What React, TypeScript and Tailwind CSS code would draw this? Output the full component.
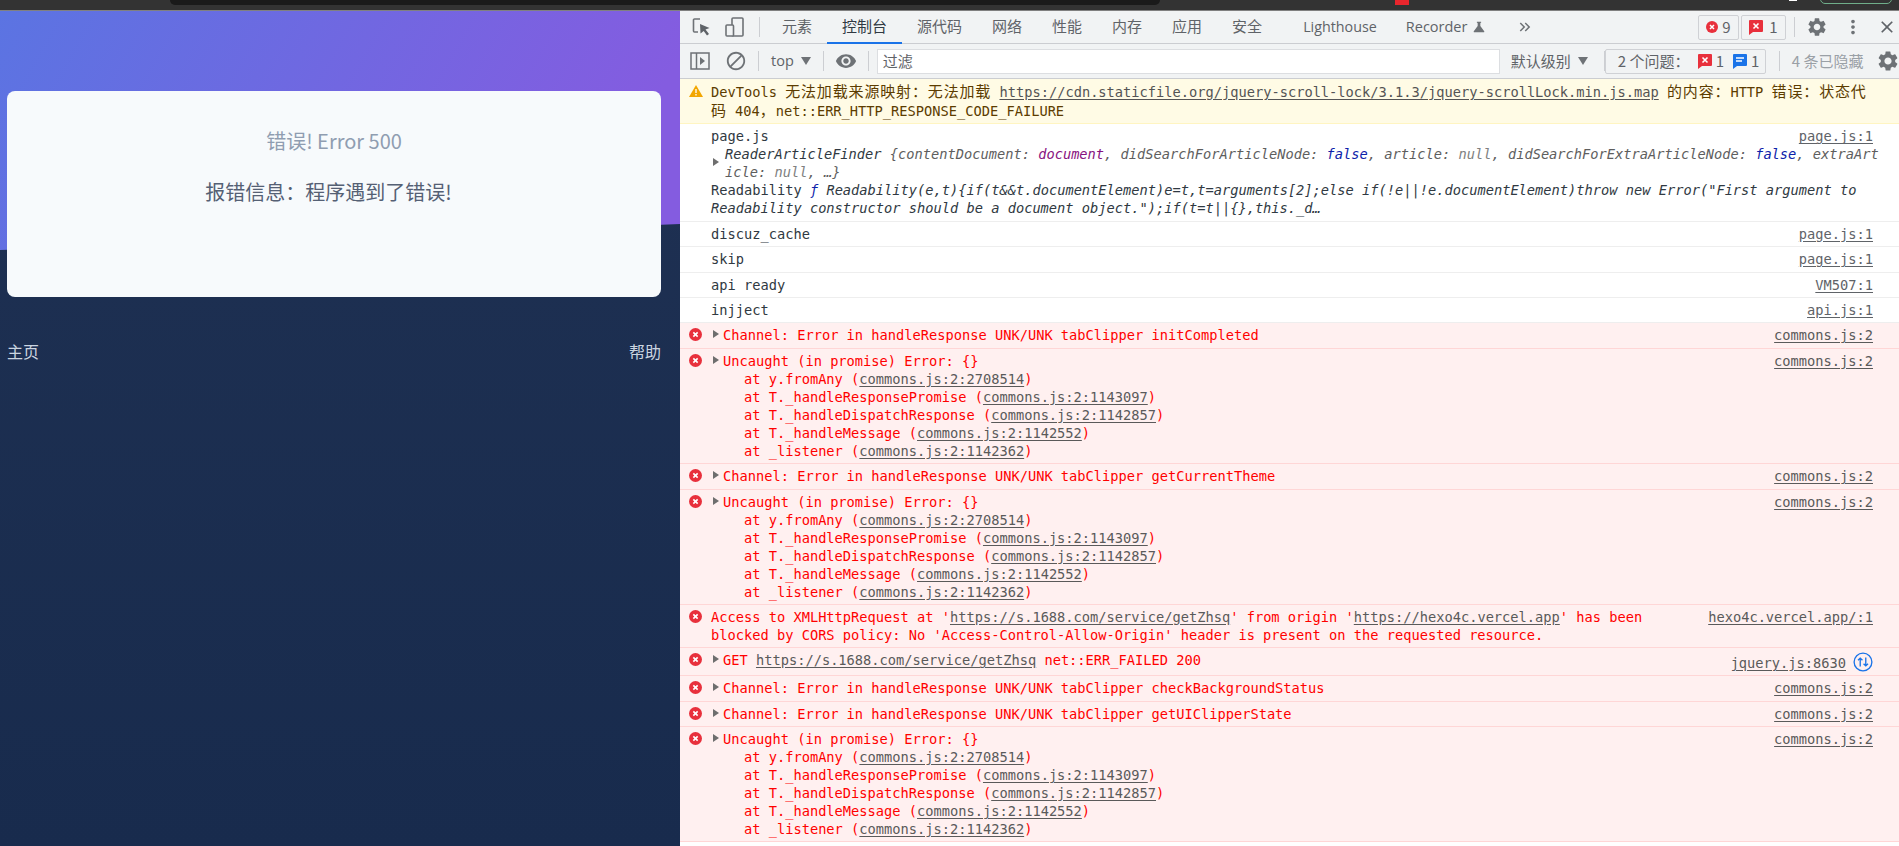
import type { ReactNode } from 'react'
import {
  MdBlock,
  MdClose,
  MdKeyboardDoubleArrowRight,
  MdMoreVert,
  MdScience,
  MdSettings,
  MdVisibility,
} from 'react-icons/md'

const TABS = ['元素', '控制台', '源代码', '网络', '性能', '内存', '应用', '安全']

const STACK = [
  ['y.fromAny', 'commons.js:2:2708514'],
  ['T._handleResponsePromise', 'commons.js:2:1143097'],
  ['T._handleDispatchResponse', 'commons.js:2:1142857'],
  ['T._handleMessage', 'commons.js:2:1142552'],
  ['_listener', 'commons.js:2:1142362'],
]

function ErrorDot({ size = 13 }: { size?: number }) {
  return (
    <svg width={size} height={size} viewBox="0 0 12 12" className="shrink-0">
      <circle cx="6" cy="6" r="6" fill="#e8303c" />
      <path d="M4 4l4 4M8 4l-4 4" stroke="#fff" strokeWidth="1.5" />
    </svg>
  )
}

function IssueIcon({ color, kind }: { color: string; kind: 'x' | 'lines' }) {
  return (
    <svg width="14" height="15" viewBox="0 0 14 15" className="shrink-0">
      <path d="M0 1a1 1 0 0 1 1-1h12a1 1 0 0 1 1 1v10a1 1 0 0 1-1 1H4l-4 3z" fill={color} />
      {kind === 'x' ? (
        <path d="M4.5 3.5l5 5M9.5 3.5l-5 5" stroke="#fff" strokeWidth="1.6" />
      ) : (
        <path d="M3 4h8M3 7h6" stroke="#fff" strokeWidth="1.5" />
      )}
    </svg>
  )
}

function Sep({ className = '' }: { className?: string }) {
  return <div className={`w-px h-[20px] bg-[#ccced2] shrink-0 ${className}`} />
}

function Cjk({ children }: { children: ReactNode }) {
  return <span className="text-[15px] tracking-[0.85px] font-['Noto_Sans_CJK_SC',sans-serif]">{children}</span>
}

function Arrow() {
  return <span className="absolute left-[33px] top-[7px] w-0 h-0 border-y-[4.5px] border-y-transparent border-l-[6px] border-l-[#6e6e6e]" />
}

function Source({ children, tone = 'plain' }: { children: ReactNode; tone?: string }) {
  return (
    <span className={`float-right mr-[-1px] underline underline-offset-2 ${tone === 'err' ? 'text-[#5a5a5a]' : 'text-[#5f6368]'}`}>
      {children}
    </span>
  )
}

function Row({ children, tone = 'plain', className = '' }: { children: ReactNode; tone?: 'plain' | 'err' | 'warn'; className?: string }) {
  const colours = {
    plain: 'bg-white border-[#eeeeee] text-[#303942]',
    err: 'bg-[#fff0f0] border-[#ffd6d6] text-[#ff0000]',
    warn: 'bg-[#fffbe5] border-[#fff5c2] text-[#5c3c00]',
  }[tone]
  return (
    <div className={`relative border-b pt-[3px] pb-[3.4px] pl-[31px] pr-[27px] whitespace-pre ${colours} ${className}`}>
      {tone === 'err' && (
        <span className="absolute left-[9px] top-[5px]">
          <ErrorDot />
        </span>
      )}
      {children}
    </div>
  )
}

function ChannelRow({ name }: { name: string }) {
  return (
    <Row tone="err">
      <Arrow />
      <Source tone="err">commons.js:2</Source>
      <div className="pl-[12px]">Channel: Error in handleResponse UNK/UNK tabClipper {name}</div>
    </Row>
  )
}

function UncaughtRow() {
  return (
    <Row tone="err">
      <Arrow />
      <Source tone="err">commons.js:2</Source>
      <div className="pl-[12px]">Uncaught (in promise) Error: {'{}'}</div>
      {STACK.map(([fn, loc]) => (
        <div key={loc}>
          {'    at '}
          {fn} (<span className="underline underline-offset-2 text-[#5a5a5a]">{loc}</span>)
        </div>
      ))}
    </Row>
  )
}

function SimpleLog({ text, source }: { text: string; source: string }) {
  return (
    <Row>
      <Source>{source}</Source>
      <div>{text}</div>
    </Row>
  )
}

export default function App() {
  return (
    <div className="w-[1899px] h-[846px] overflow-hidden flex flex-col bg-white">
      {/* Browser chrome sliver */}
      <div className="relative h-[11px] shrink-0 bg-[#333333] border-b border-[#808080]">
        <div className="absolute left-[170px] top-0 w-[990px] h-[5px] bg-[#1a1a1a] rounded-b-[6px]" />
        <div className="absolute left-[1395px] top-0 w-[14px] h-[5px] bg-[#e8262d]" />
        <div className="absolute left-[1789px] top-0 w-[8px] h-[1px] bg-white" />
        <div className="absolute left-[1820px] top-[-6px] w-[72px] h-[10px] border border-[#6fae8a] rounded-[5px]" />
      </div>

      <div className="flex flex-1 min-h-0">
        {/* Error page */}
        <div className="relative w-[680px] shrink-0 bg-gradient-to-b from-[#1f3153] to-[#182b4d] pl-[7px] pr-[19px] pt-[80px] font-['Noto_Sans_CJK_SC',sans-serif]">
          <svg className="absolute left-0 top-0" width="680" height="240" viewBox="0 0 680 240" preserveAspectRatio="none">
            <defs>
              <linearGradient id="hero" x1="0" y1="0" x2="1" y2="0.2">
                <stop offset="0" stopColor="#5b74e2" />
                <stop offset="1" stopColor="#845ce0" />
              </linearGradient>
            </defs>
            <path d="M0 0H680V213C450 222 220 232 0 239Z" fill="url(#hero)" />
          </svg>
          <div className="relative bg-[#f7fafc] rounded-lg h-[206px] pt-[35px] text-center text-[20px] leading-[30px]">
            <p className="text-[#8f9db1]">错误! Error 500</p>
            <p className="mt-[21px] pr-[11px] text-[#556074]">报错信息：程序遇到了错误!</p>
          </div>
          <div className="relative flex justify-between mt-[42px] text-[16px] leading-[24px] text-[#cbd5e0]">
            <span>主页</span>
            <span>帮助</span>
          </div>
        </div>

        {/* DevTools */}
        <div className="flex-1 min-w-0 flex flex-col">
          {/* Tabs */}
          <div className="relative h-[33px] shrink-0 flex items-center bg-[#f1f3f4] border-b border-[#cbcdd1] text-[15px] text-[#5f6368] font-['Noto_Sans_CJK_SC',sans-serif]">
            <svg width="20" height="20" viewBox="0 0 20 20" className="ml-[12px] shrink-0" fill="none">
              <path d="M8 2H2.5A1 1 0 0 0 1.500 3v11a1 1 0 0 0 1 1H6" stroke="#6e7276" strokeWidth="1.600" />
              <path d="M8 7l9.500 4-4 1.500 3.500 4.500-2 1.500-3.300-4.500L8.500 16.500z" fill="#5f6368" />
            </svg>
            <svg width="20" height="20" viewBox="0 0 20 20" className="ml-[13px] shrink-0" fill="none" stroke="#6e7276" strokeWidth="1.600">
              <rect x="7" y="1" width="11" height="18" rx="1" />
              <rect x="1" y="8" width="7.500" height="11" rx="1" fill="#f1f3f4" />
            </svg>
            <Sep className="ml-[14px] mr-[7px]" />
            {TABS.map(t => (
              <div
                key={t}
                className={`h-[33px] px-[15px] flex items-center border-b-2 ${t === '控制台' ? 'border-[#1a73e8] text-[#303942]' : 'border-transparent'}`}
              >
                {t}
              </div>
            ))}
            <span className="ml-[26px] font-['Open_Sans',sans-serif] text-[14.300px]">Lighthouse</span>
            <span className="ml-[29px] font-['Open_Sans',sans-serif] text-[14.500px]">Recorder</span>
            <MdScience size={16} className="ml-[4px] shrink-0 text-[#6e7276]" />
            <MdKeyboardDoubleArrowRight size={18} className="ml-[29px] shrink-0 text-[#6e7276]" />
            <div className="ml-auto flex items-center">
              <div className="w-[41px] h-[25px] flex items-center justify-center gap-[4px] border border-[#cfd1d5] rounded-[2px]">
                <ErrorDot size={12} />
                <span>9</span>
              </div>
              <div className="ml-[2px] w-[45px] h-[25px] flex items-center justify-center gap-[6px] border border-[#cfd1d5] rounded-[2px]">
                <IssueIcon color="#e8303c" kind="x" />
                <span>1</span>
              </div>
              <Sep className="ml-[8px]" />
              <MdSettings size={22} className="ml-[11px] text-[#6e7276]" />
              <MdMoreVert size={22} className="ml-[14px] text-[#6e7276]" />
              <MdClose size={20} className="ml-[13px] mr-[2px] text-[#5f6368]" />
            </div>
          </div>

          {/* Console toolbar */}
          <div className="h-[35px] shrink-0 flex items-center bg-[#f1f3f4] border-b border-[#cbcdd1] text-[15px] text-[#5f6368] font-['Noto_Sans_CJK_SC',sans-serif] overflow-hidden whitespace-nowrap">
            <svg width="20" height="18" viewBox="0 0 20 18" className="ml-[10px] shrink-0" fill="none">
              <rect x="1" y="1" width="18" height="16" stroke="#6e7276" strokeWidth="1.500" />
              <path d="M6.500 1v16" stroke="#6e7276" strokeWidth="1.500" />
              <path d="M10 5l5 4-5 4z" fill="#6e7276" />
            </svg>
            <MdBlock size={22} className="ml-[15px] shrink-0 text-[#6e7276]" />
            <Sep className="ml-[11px]" />
            <span className="ml-[12px] font-['Open_Sans',sans-serif] text-[14.500px]">top</span>
            <span className="ml-[7px] w-0 h-0 shrink-0 border-x-[5px] border-x-transparent border-t-[8px] border-t-[#6e7276]" />
            <Sep className="ml-[12px]" />
            <MdVisibility size={22} className="ml-[11px] shrink-0 text-[#6e7276]" />
            <Sep className="ml-[11px]" />
            <div className="ml-[8px] w-[623px] h-[25px] shrink-0 bg-white border border-[#dcdee1] pl-[5px] flex items-center text-[#5f6368]">过滤</div>
            <span className="ml-[11px] shrink-0">默认级别</span>
            <span className="ml-[7px] w-0 h-0 shrink-0 border-x-[5px] border-x-transparent border-t-[8px] border-t-[#6e7276]" />
            <Sep className="ml-[16px]" />
            <div className="w-[161px] h-[25px] shrink-0 pl-[12px] flex items-center border border-[#cfd1d5] rounded-[2px] whitespace-pre">
              <span className="w-[80px] shrink-0">2 个问题：</span>
              <IssueIcon color="#e8303c" kind="x" />
              <span className="ml-[4px]">1</span>
              <span className="ml-[9px]">
                <IssueIcon color="#1a73e8" kind="lines" />
              </span>
              <span className="ml-[4px]">1</span>
            </div>
            <Sep className="ml-[13px]" />
            <span className="ml-[12px] text-[#9aa0a6] whitespace-pre">4 条已隐藏</span>
            <MdSettings size={24} className="ml-[13px] shrink-0 text-[#6e7276]" />
          </div>

          {/* Console messages */}
          <div className="flex-1 min-h-0 overflow-hidden text-[13.700px] leading-[18px] font-['DejaVu_Sans_Mono','Noto_Sans_CJK_SC',monospace]">
            <Row tone="warn">
              <svg width="14" height="12" viewBox="0 0 14 12" className="absolute left-[9px] top-[6px]">
                <path d="M7 0l7 12H0z" fill="#f2a600" />
                <path d="M7 4v4M7 9v1.500" stroke="#fff" strokeWidth="1.300" />
              </svg>
              <div>
                DevTools <Cjk>无法加载来源映射：无法加载</Cjk>{' '}
                <span className="underline underline-offset-2 text-[#545454]">https://cdn.staticfile.org/jquery-scroll-lock/3.1.3/jquery-scrollLock.min.js.map</span>{' '}
                <Cjk>的内容：</Cjk>HTTP <Cjk>错误：状态代</Cjk>
              </div>
              <div>
                <Cjk>码</Cjk> 404<Cjk>，</Cjk>net::ERR_HTTP_RESPONSE_CODE_FAILURE
              </div>
            </Row>

            <Row>
              <Source>page.js:1</Source>
              <div>page.js</div>
              <div className="relative">
                <span className="absolute left-[2px] top-[13px] w-0 h-0 border-y-[4.500px] border-y-transparent border-l-[6px] border-l-[#6e6e6e]" />
                <div className="pl-[14px] italic text-[#5e5e5e]">
                  <span className="text-[#303942]">ReaderArticleFinder</span> {'{'}contentDocument: <span className="text-[#881280]">document</span>, didSearchForArticleNode: <span className="text-[#0d22aa]">false</span>, article: <span className="text-[#808080]">null</span>, didSearchForExtraArticleNode: <span className="text-[#0d22aa]">false</span>, extraArt
                </div>
                <div className="pl-[14px] italic text-[#5e5e5e]">
                  icle: <span className="text-[#808080]">null</span>, …{'}'}
                </div>
              </div>
              <div>
                Readability <span className="italic text-[#0d22aa]">ƒ</span>{' '}
                <span className="italic">Readability(e,t){'{'}if(t&amp;&amp;t.documentElement)e=t,t=arguments[2];else if(!e||!e.documentElement)throw new Error("First argument to</span>
              </div>
              <div className="italic">Readability constructor should be a document object.");if(t=t||{'{}'},this._d…</div>
            </Row>

            <SimpleLog text="discuz_cache" source="page.js:1" />
            <SimpleLog text="skip" source="page.js:1" />
            <SimpleLog text="api ready" source="VM507:1" />
            <SimpleLog text="injject" source="api.js:1" />

            <ChannelRow name="initCompleted" />
            <UncaughtRow />
            <ChannelRow name="getCurrentTheme" />
            <UncaughtRow />

            <Row tone="err">
              <Source tone="err">hexo4c.vercel.app/:1</Source>
              <div>
                Access to XMLHttpRequest at '<span className="underline underline-offset-2 text-[#5a5a5a]">https://s.1688.com/service/getZhsq</span>' from origin '<span className="underline underline-offset-2 text-[#5a5a5a]">https://hexo4c.vercel.app</span>' has been
              </div>
              <div>blocked by CORS policy: No 'Access-Control-Allow-Origin' header is present on the requested resource.</div>
            </Row>

            <Row tone="err" className="h-[28px]">
              <Arrow />
              <span className="float-right flex items-center gap-[7px] mr-[-1px]">
                <span className="underline underline-offset-2 text-[#5a5a5a] mt-[3px]">jquery.js:8630</span>
                <svg width="20" height="20" viewBox="0 0 18 18" fill="none" stroke="#1a73e8" strokeWidth="1.200">
                  <circle cx="9" cy="9" r="8" />
                  <path d="M6.500 13V5.500M4.500 7.500l2-2 2 2M11.500 5v7.500M9.500 10.500l2 2 2-2" />
                </svg>
              </span>
              <div className="pl-[12px]">
                GET <span className="underline underline-offset-2 text-[#5a5a5a]">https://s.1688.com/service/getZhsq</span> net::ERR_FAILED 200
              </div>
            </Row>

            <ChannelRow name="checkBackgroundStatus" />
            <ChannelRow name="getUIClipperState" />
            <UncaughtRow />
          </div>
        </div>
      </div>
    </div>
  )
}
